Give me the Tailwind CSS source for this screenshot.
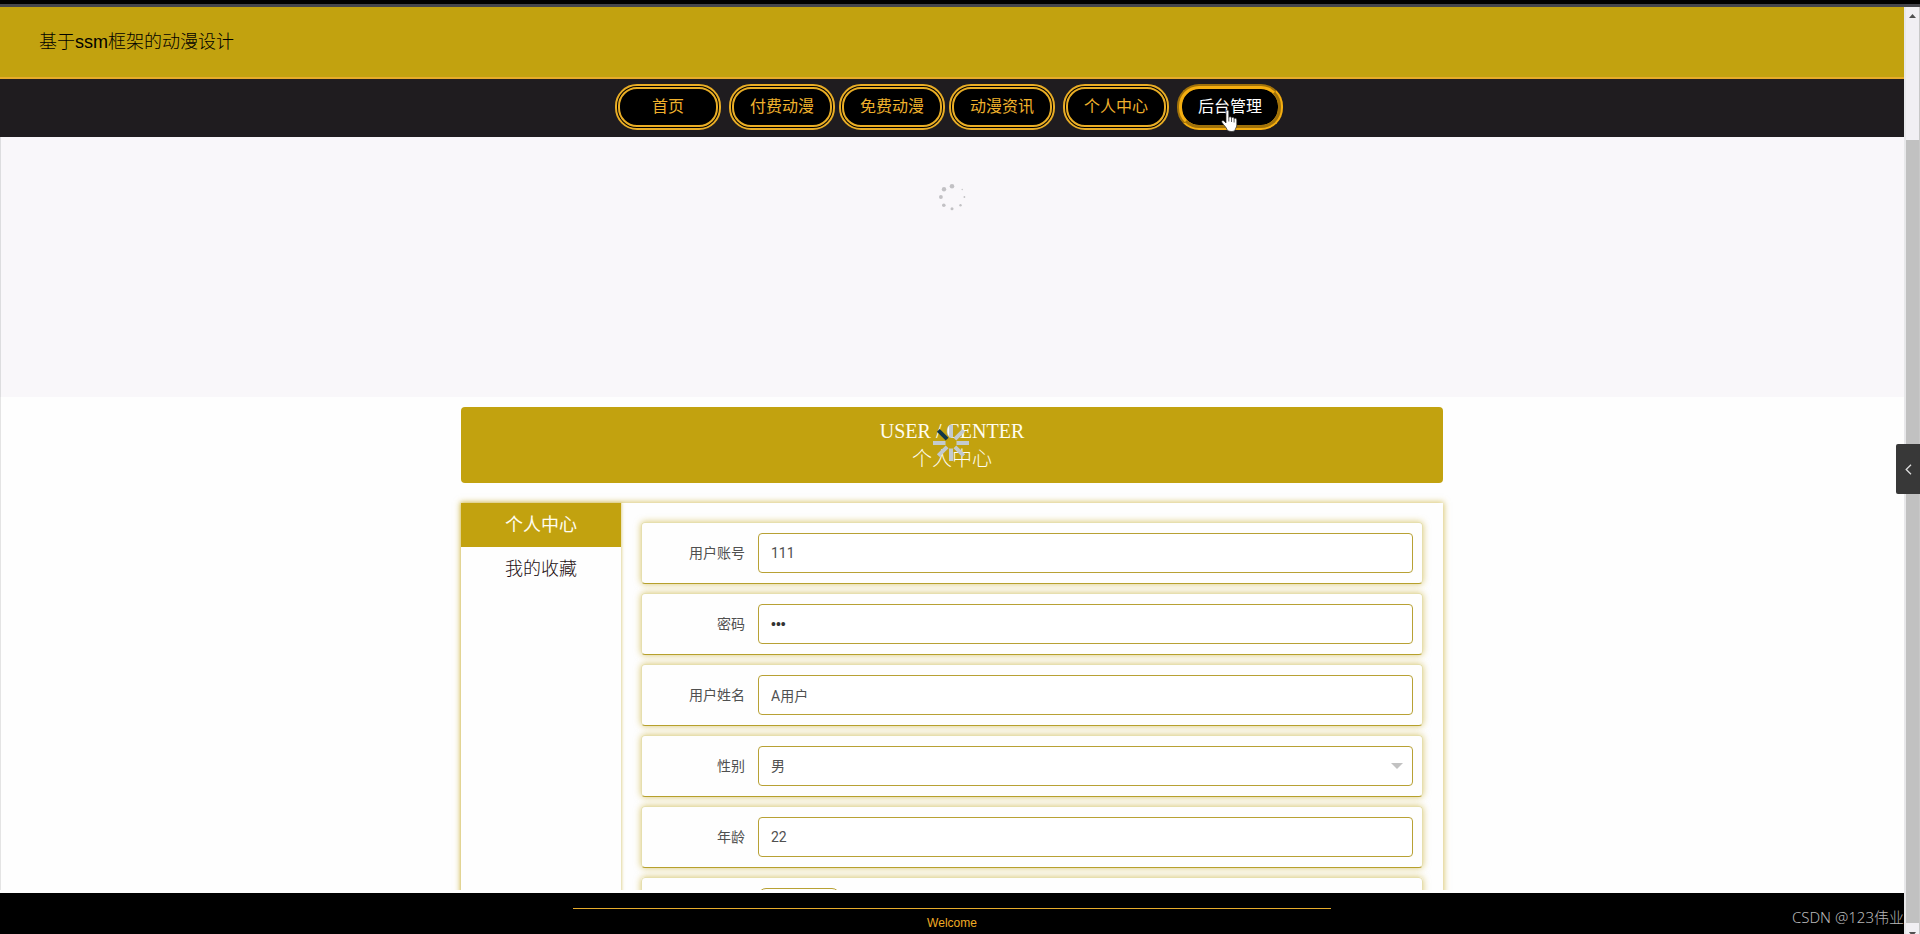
<!DOCTYPE html>
<html lang="zh-CN">
<head>
<meta charset="utf-8">
<title>基于ssm框架的动漫设计</title>
<script src="https://cdn.jsdelivr.net/npm/@tailwindcss/browser@4"></script>
</head>
<body class="flex h-screen flex-col overflow-hidden bg-[#fefefe] font-['Liberation_Sans','Noto_Sans_CJK_SC',sans-serif] text-black">
<div class="h-[7px] shrink-0 border-b-3 border-[#45454b] bg-black"></div>
<div class="relative flex min-h-0 flex-1">
  <div class="flex min-w-0 flex-1 flex-col">
    <header class="flex h-[72px] shrink-0 items-center border-b-2 border-[#e6ab2c] bg-[#c2a20f] px-[39px]">
      <h1 class="text-lg font-light">基于ssm框架的动漫设计</h1>
    </header>
    <nav class="flex h-[58px] shrink-0 justify-center gap-2 bg-[#1f1c1f] pr-[6px] pt-[5px] text-base text-[#efb02c]">
      <a href="#" class="flex h-[46px] w-[106px] items-center justify-center rounded-[22px] border-5 border-double border-[#e9ad25] bg-black">首页</a>
      <div class="flex gap-1">
        <a href="#" class="flex h-[46px] w-[106px] items-center justify-center rounded-[22px] border-5 border-double border-[#e9ad25] bg-black">付费动漫</a>
        <a href="#" class="flex h-[46px] w-[106px] items-center justify-center rounded-[22px] border-5 border-double border-[#e9ad25] bg-black">免费动漫</a>
        <a href="#" class="flex h-[46px] w-[106px] items-center justify-center rounded-[22px] border-5 border-double border-[#e9ad25] bg-black">动漫资讯</a>
      </div>
      <a href="#" class="flex h-[46px] w-[106px] items-center justify-center rounded-[22px] border-5 border-double border-[#e9ad25] bg-black">个人中心</a>
      <a href="#" class="relative flex h-[46px] w-[106px] items-center justify-center rounded-[22px] border-5 border-[#f5ae10] bg-black text-white [border-style:groove]">后台管理
        <svg class="absolute left-[38px] top-[20px]" width="19" height="24" viewBox="0 0 19 24" aria-hidden="true"><path d="M6 2.5C6 .7 8.8.7 8.8 2.5V8.5c.5-1.2 2.6-1 2.7.4.7-1 2.5-.6 2.6.8.9-.9 2.7-.4 2.7 1.2v5c0 2-1.2 3-1.5 4.500C15 22 13.500 22.500 11.500 22.500S7.500 22 7 20.500C6.300 18.200 3.500 16 2 13.500 1 11.800 2.800 10.700 4 12l2 2z" fill="#fff" stroke="#222" stroke-width=".7"/><path d="M8.800 8.500v4M11.500 9v4M14.100 10v3.500" stroke="#333" stroke-width=".8" fill="none"/></svg>
      </a>
    </nav>
    <section class="flex h-[260px] shrink-0 justify-center border-l border-[#dddddf] bg-[#f9f7fa] pr-px pt-[47px]" aria-label="轮播图">
      <svg width="27" height="27" viewBox="0 0 27 27" fill="#c2c1c4" aria-hidden="true"><circle cx="13" cy="2.300" r="2.300"/><circle cx="5" cy="5.200" r="2.200"/><circle cx="1.900" cy="13" r="1.900"/><circle cx="4.800" cy="21.300" r="1.800"/><circle cx="13" cy="24.700" r="1.500"/><circle cx="21.500" cy="21.300" r="1.200"/><circle cx="25.400" cy="13" r=".9"/><circle cx="23.200" cy="5.500" r=".7"/></svg>
    </section>
    <main class="mb-[3px] min-h-0 flex-1 overflow-hidden border-l border-[#e4e4e4] pr-px pt-[10px]">
      <div class="mx-auto w-[982px]">
        <div class="relative rounded-sm bg-[#c2a20f] py-[10px] text-center font-['Liberation_Serif','Noto_Sans_CJK_SC',serif] text-xl leading-7 text-[#fffdf0]">
          <h2>USER / CENTER</h2>
          <p class="font-light">个人中心</p>
          <svg class="absolute left-1/2 top-[17px] -ml-5" width="38" height="38" viewBox="-19 -19 38 38" stroke="#c3cace" stroke-width="4" aria-hidden="true"><path d="M0-5.500V-18M3.900-3.900L12.700-12.700M5.500 0H18M3.900 3.900L12.700 12.700M0 5.500V18M-3.900 3.900L-12.700 12.700M-5.500 0H-18"/><path d="M-3.900-3.900L-12.700-12.700" stroke="#123748"/></svg>
        </div>
        <div class="mt-5 flex h-[640px] shadow-[0_0_6px_1px_#c1a10f99]">
          <aside class="w-[161px] border-r border-[#ebe4bd] text-center text-lg font-light text-[#1d0f12] shadow-[0_0_3px_#c1a10f66]">
            <a href="#" class="block h-11 bg-[#c2a20f] pt-2 font-normal text-[#fffdf0]">个人中心</a>
            <a href="#" class="block h-11 pt-2">我的收藏</a>
          </aside>
          <form class="flex flex-1 flex-col gap-[9px] pl-[19px] pr-5 pt-[19px] text-sm text-[#505050]">
            <div class="flex h-[62px] shrink-0 items-center rounded-sm border border-[#e6dfae] border-b-[#b6a02c] pr-[9px] pl-2 shadow-[0_0_7px_#c1a10f99]">
              <label for="account" class="w-24 pr-[1px] text-right">用户账号</label>
              <input id="account" type="text" value="111" class="ml-3 h-10 min-w-0 flex-1 rounded-sm border border-[#b8a134] bg-white px-3 font-['Roboto','Noto_Sans_CJK_SC',sans-serif]">
            </div>
            <div class="flex h-[62px] shrink-0 items-center rounded-sm border border-[#e6dfae] border-b-[#b6a02c] pr-[9px] pl-2 shadow-[0_0_7px_#c1a10f99]">
              <label for="password" class="w-24 pr-[1px] text-right">密码</label>
              <input id="password" type="password" value="111" class="ml-3 h-10 min-w-0 flex-1 rounded-sm border border-[#b8a134] bg-white px-3 font-['Liberation_Sans',sans-serif] text-[#333]">
            </div>
            <div class="flex h-[62px] shrink-0 items-center rounded-sm border border-[#e6dfae] border-b-[#b6a02c] pr-[9px] pl-2 shadow-[0_0_7px_#c1a10f99]">
              <label for="name" class="w-24 pr-[1px] text-right">用户姓名</label>
              <input id="name" type="text" value="A用户" class="ml-3 h-10 min-w-0 flex-1 rounded-sm border border-[#b8a134] bg-white px-3 font-['Roboto','Noto_Sans_CJK_SC',sans-serif]">
            </div>
            <div class="flex h-[62px] shrink-0 items-center rounded-sm border border-[#e6dfae] border-b-[#b6a02c] pr-[9px] pl-2 shadow-[0_0_7px_#c1a10f99]">
              <label for="gender" class="w-24 pr-[1px] text-right">性别</label>
              <div class="relative ml-3 flex h-10 min-w-0 flex-1">
                <select id="gender" class="w-full appearance-none rounded-sm border border-[#b8a134] bg-white px-3"><option>男</option><option>女</option></select>
                <span class="pointer-events-none absolute right-[10px] top-[17px] border-x-6 border-t-6 border-x-transparent border-t-[#c2c2c2]"></span>
              </div>
            </div>
            <div class="flex h-[62px] shrink-0 items-center rounded-sm border border-[#e6dfae] border-b-[#b6a02c] pr-[9px] pl-2 shadow-[0_0_7px_#c1a10f99]">
              <label for="age" class="w-24 pr-[1px] text-right">年龄</label>
              <input id="age" type="text" value="22" class="ml-3 h-10 min-w-0 flex-1 rounded-sm border border-[#b8a134] bg-white px-3 font-['Roboto','Noto_Sans_CJK_SC',sans-serif]">
            </div>
            <div class="flex h-[102px] shrink-0 rounded-sm border border-[#e6dfae] pl-[116px] pt-[10px] shadow-[0_0_7px_#c1a10f99]">
              <button type="button" aria-label="上传头像" class="h-20 w-[82px] rounded-lg border border-[#b8a134]"></button>
            </div>
          </form>
        </div>
      </div>
    </main>
    <footer class="relative h-[41px] shrink-0 bg-black pt-[15px] text-center text-xs text-[#efab25]">
      <div class="mx-auto w-[758px] border-t border-[#e6ab2c] pt-[6px]">Welcome</div>
      <span class="absolute right-0 top-[13px] font-['Noto_Sans','Noto_Sans_CJK_SC',sans-serif] text-[15px] leading-[22px] font-light text-[#b8b8b8]">CSDN @123伟业</span>
    </footer>
  </div>
  <div class="flex w-4 shrink-0 flex-col border-x-1 border-l-2 border-l-[#e8e8ea] border-r-[#c8c8c8] bg-[#f1eff3]" aria-hidden="true">
    <div class="flex h-[133px] shrink-0 justify-center pt-[7px]"><svg width="7" height="4" viewBox="0 0 7 4" fill="#505050"><path d="M3.500 0L7 4H0z"/></svg></div>
    <div class="flex-1 bg-[#c1c1c1]"></div>
    <div class="flex h-[11px] shrink-0 items-end justify-center"><svg width="7" height="2" viewBox="0 0 7 2" fill="#505050"><path d="M0 0H7L5.500 2H1.500z"/></svg></div>
  </div>
  <button type="button" aria-label="展开" class="absolute right-0 top-[437px] flex h-[50px] w-6 items-center justify-center rounded-l-xs bg-[#383838]">
    <svg width="7" height="11" viewBox="0 0 7 11" fill="none" stroke="#ddd" stroke-width="1.300"><path d="M6 .7L1.200 5.500 6 10.300"/></svg>
  </button>
</div>
</body>
</html>
